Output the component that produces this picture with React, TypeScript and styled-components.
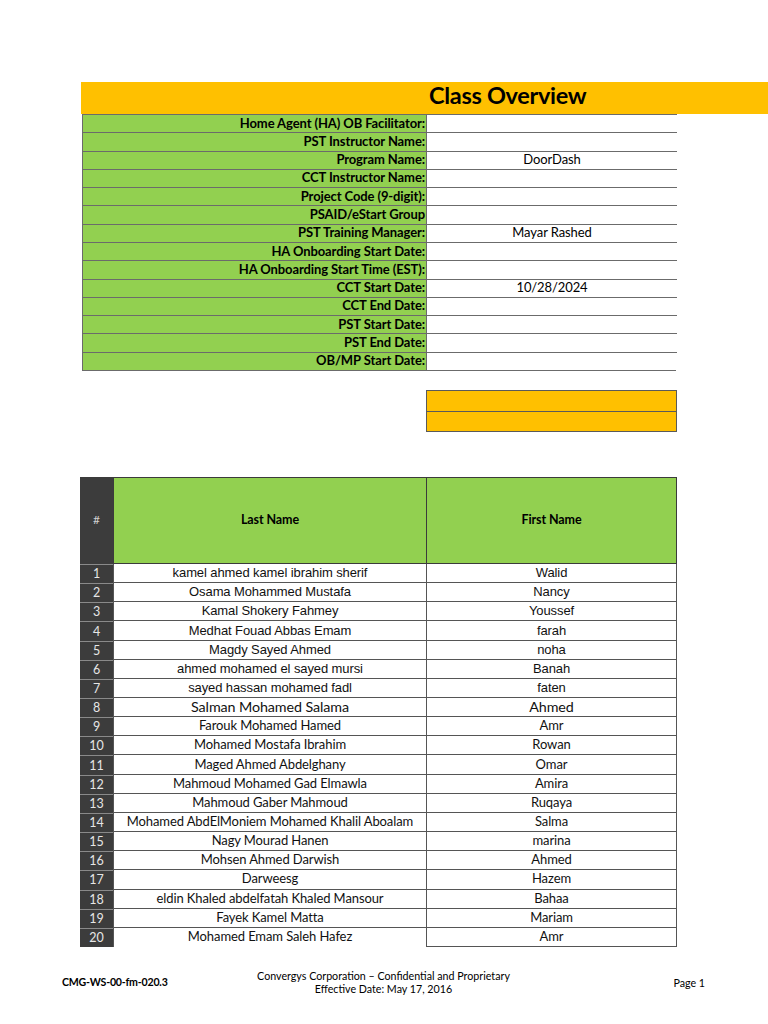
import React from "react";
import styled, { createGlobalStyle } from "styled-components";

const Global = createGlobalStyle`
  html, body { margin: 0; padding: 0; background: #fff; }
  body { font-family: Lato, "Open Sans", sans-serif; color: #000; }
`;

const Page = styled.div`
  width: 768px;
  height: 1024px;
  position: relative;
  display: flex;
  flex-direction: column;
  overflow: hidden;
`;

const TitleBar = styled.div`
  margin: 82px 0 0 81px;
  height: 32px;
  background: #ffc000;
  display: flex;
  align-items: center;
  padding-left: 348px;
  box-sizing: border-box;
  padding-bottom: 5px;
`;

const Title = styled.h1`
  margin: 0;
  font-size: 23.5px;
  line-height: 1;
  font-weight: 700;
  letter-spacing: -0.3px;
`;

const InfoGrid = styled.div`
  margin-left: 82px;
  width: 594px;
  height: 257px;
  display: grid;
  grid-template-columns: 344px 250px;
  grid-template-rows: repeat(14, minmax(0, 1fr));
  border: 1px solid #6b6b6b;
  border-top: none;
  box-sizing: border-box;
`;

const InfoLabel = styled.div`
  background: #92d050;
  border-top: 1px solid #6b6b6b;
  border-right: 1px solid #6b6b6b;
  display: flex;
  align-items: center;
  justify-content: flex-end;
  padding: 0 1px 2px 0;
  font-size: 13px;
  line-height: 14px;
  font-weight: 700;
  letter-spacing: -0.1px;
  white-space: nowrap;
  overflow: hidden;
`;

const InfoValue = styled.div`
  background: #fff;
  border-top: 1px solid #6b6b6b;
  display: flex;
  align-items: center;
  justify-content: center;
  padding-bottom: 2px;
  font-size: 13px;
  line-height: 14px;
  letter-spacing: -0.1px;
  overflow: hidden;
`;

const OrangeBox = styled.div`
  margin: 19px 0 0 426px;
  width: 251px;
  display: grid;
  grid-template-rows: 20px 20px;
  border: 1px solid #5a5a5a;
  box-sizing: border-box;
`;

const OrangeCell = styled.div<{ $top?: boolean }>`
  background: #ffc000;
  border-top: ${(p) => (p.$top ? "none" : "1px solid #5a5a5a")};
`;

const Roster = styled.div`
  margin: 45px 0 0 80px;
  width: 597px;
  display: grid;
  grid-template-columns: 33px 313px 251px;
  grid-template-rows: 86px repeat(20, minmax(0, 1fr));
  height: 469px;
  border-top: 1px solid #3b3b3b;
`;

const NumHead = styled.div`
  background: #3c3c3c;
  color: #cfcfcf;
  font-size: 12px;
  display: flex;
  align-items: center;
  justify-content: center;
  padding-bottom: 3px;
`;

const HeadCell = styled.div<{ $last?: boolean }>`
  background: #92d050;
  border-left: 1px solid #3b3b3b;
  border-right: ${(p) => (p.$last ? "1px solid #3b3b3b" : "none")};
  border-bottom: 1px solid #3b3b3b;
  display: flex;
  align-items: center;
  justify-content: center;
  padding-bottom: 3px;
  font-size: 12.5px;
  font-weight: 700;
  letter-spacing: -0.1px;
`;

const NumCell = styled.div`
  background: #3c3c3c;
  color: #e6e6e6;
  border-top: 1px solid #8a8a8a;
  font-size: 12.5px;
  line-height: 15px;
  display: flex;
  align-items: center;
  justify-content: center;
  padding-bottom: 1px;
  overflow: hidden;
`;

const NameCell = styled.div<{ $alt?: boolean; $big?: boolean; $last?: boolean; $noBottom?: boolean }>`
  background: #fff;
  border-left: 1px solid #555;
  border-right: ${(p) => (p.$last ? "1px solid #555" : "none")};
  border-bottom: ${(p) => (p.$noBottom ? "none" : "1px solid #555")};
  display: flex;
  align-items: center;
  justify-content: center;
  padding-bottom: 1px;
  line-height: 15px;
  font-family: ${(p) => (p.$alt ? '"Liberation Sans", Arial, sans-serif' : 'Lato, sans-serif')};
  font-size: ${(p) => (p.$alt ? "13px" : p.$big ? "14.3px" : "13px")};
  letter-spacing: -0.1px;
  white-space: nowrap;
  color: #111;
  overflow: hidden;
`;

const Footer = styled.div`
  margin-top: 22px;
  display: grid;
  grid-template-columns: 1fr auto 1fr;
  align-items: center;
  padding: 0 63px 0 62px;
  font-size: 10.7px;
`;

const FooterLeft = styled.div`
  font-weight: 700;
  font-size: 10.6px;
  letter-spacing: -0.2px;
`;

const FooterCenter = styled.div`
  text-align: center;
  line-height: 13px;
  font-size: 10.7px;
`;

const FooterRight = styled.div`
  text-align: right;
  font-size: 10.7px;
`;

const info: [string, string][] = [
  ["Home Agent (HA) OB Facilitator:", ""],
  ["PST Instructor Name:", ""],
  ["Program Name:", "DoorDash"],
  ["CCT Instructor Name:", ""],
  ["Project Code (9-digit):", ""],
  ["PSAID/eStart Group", ""],
  ["PST Training Manager:", "Mayar Rashed"],
  ["HA Onboarding Start Date:", ""],
  ["HA Onboarding Start Time (EST):", ""],
  ["CCT Start Date:", "10/28/2024"],
  ["CCT End Date:", ""],
  ["PST Start Date:", ""],
  ["PST End Date:", ""],
  ["OB/MP Start Date:", ""],
];

const people: [string, string][] = [
  ["kamel ahmed kamel ibrahim sherif", "Walid"],
  ["Osama Mohammed Mustafa", "Nancy"],
  ["Kamal Shokery Fahmey", "Youssef"],
  ["Medhat Fouad Abbas Emam", "farah"],
  ["Magdy Sayed Ahmed", "noha"],
  ["ahmed mohamed el sayed mursi", "Banah"],
  ["sayed hassan mohamed fadl", "faten"],
  ["Salman Mohamed Salama", "Ahmed"],
  ["Farouk Mohamed Hamed", "Amr"],
  ["Mohamed Mostafa Ibrahim", "Rowan"],
  ["Maged Ahmed Abdelghany", "Omar"],
  ["Mahmoud Mohamed Gad Elmawla", "Amira"],
  ["Mahmoud Gaber Mahmoud", "Ruqaya"],
  ["Mohamed AbdElMoniem Mohamed Khalil Aboalam", "Salma"],
  ["Nagy Mourad Hanen", "marina"],
  ["Mohsen Ahmed Darwish", "Ahmed"],
  ["Darweesg", "Hazem"],
  ["eldin Khaled abdelfatah Khaled Mansour", "Bahaa"],
  ["Fayek Kamel Matta", "Mariam"],
  ["Mohamed Emam Saleh Hafez", "Amr"],
];

export default function App() {
  return (
    <Page>
      <Global />
      <TitleBar>
        <Title>Class Overview</Title>
      </TitleBar>
      <InfoGrid>
        {info.map(([l, v]) => (
          <React.Fragment key={l}>
            <InfoLabel>{l}</InfoLabel>
            <InfoValue>{v}</InfoValue>
          </React.Fragment>
        ))}
      </InfoGrid>
      <OrangeBox>
        <OrangeCell $top />
        <OrangeCell />
      </OrangeBox>
      <Roster>
        <NumHead>#</NumHead>
        <HeadCell>Last Name</HeadCell>
        <HeadCell $last>First Name</HeadCell>
        {people.map(([last, first], i) => {
          const alt = i < 7;
          const big = i === 7;
          return (
            <React.Fragment key={i}>
              <NumCell>{i + 1}</NumCell>
              <NameCell $alt={alt} $big={big} $noBottom={i === 19}>{last}</NameCell>
              <NameCell $alt={alt} $big={big} $last>{first}</NameCell>
            </React.Fragment>
          );
        })}
      </Roster>
      <Footer>
        <FooterLeft>CMG-WS-00-fm-020.3</FooterLeft>
        <FooterCenter>
          Convergys Corporation – Confidential and Proprietary
          <br />
          Effective Date: May 17, 2016
        </FooterCenter>
        <FooterRight>Page 1</FooterRight>
      </Footer>
    </Page>
  );
}
